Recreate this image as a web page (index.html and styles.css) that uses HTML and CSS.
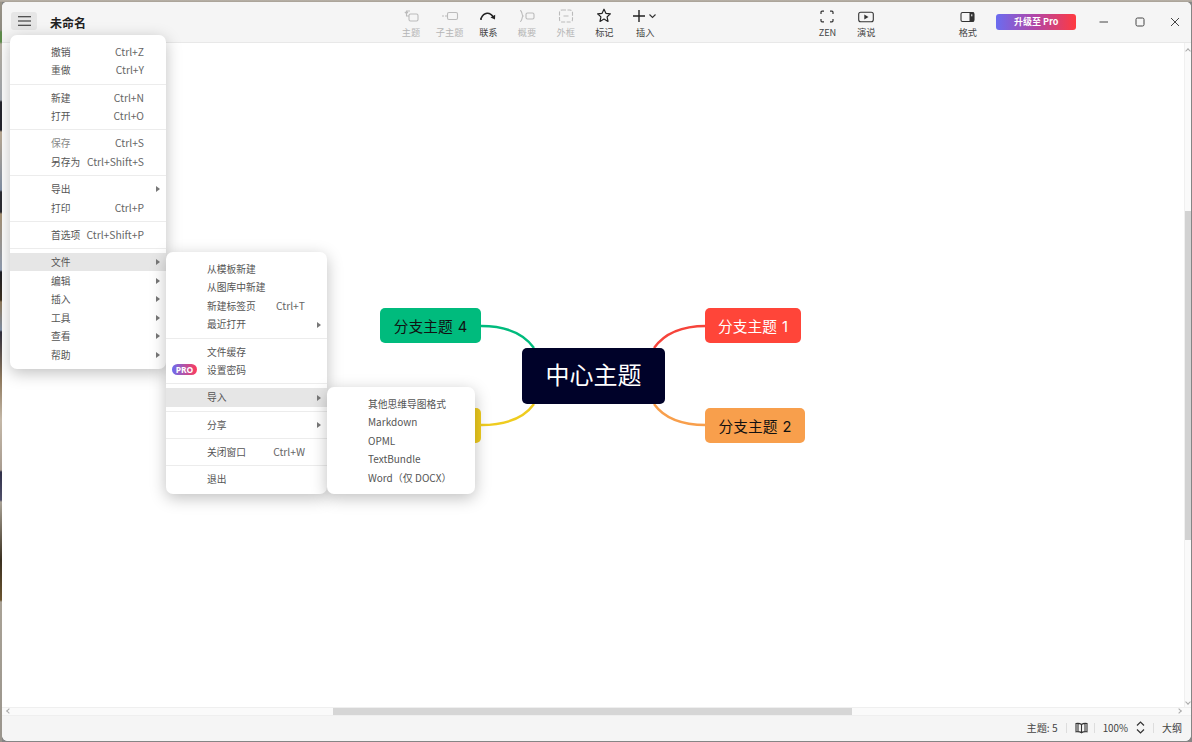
FILE: index.html
```html
<!DOCTYPE html>
<html lang="zh-CN">
<head>
<meta charset="utf-8">
<title>未命名</title>
<link rel="stylesheet" href="styles.css">
</head>
<body>
<div class="window">
  <header class="titlebar">
    <button class="menu-btn"><svg width="13" height="10" viewBox="0 0 13 10"><path d="M0 .7h13M0 5h13M0 9.300h13" stroke="#222" stroke-width="1.100"/></svg></button>
    <div class="doc-title">未命名</div>
    <div class="tools">
      <div class="tool off"><svg width="16" height="14" viewBox="0 0 16 14"><path d="M7 2H3.500v5H6M3.500 4.500 1.800 2.800M3.500 4.500 5 3" fill="none" stroke="#bbb" stroke-width="1.100"/><rect x="6" y="5" width="9" height="7" rx="1.500" fill="none" stroke="#bbb" stroke-width="1.100"/></svg><span>主题</span></div>
      <div class="tool off"><svg width="18" height="14" viewBox="0 0 18 14"><path d="M1 7h5" stroke="#bbb" stroke-width="1.200" stroke-dasharray="2 1"/><rect x="6.500" y="3.500" width="10" height="7" rx="1.500" fill="none" stroke="#bbb" stroke-width="1.100"/></svg><span>子主题</span></div>
      <div class="tool"><svg width="18" height="14" viewBox="0 0 18 14"><path d="M2 9.500C5 3 11 2.500 14.500 8.500" fill="none" stroke="#222" stroke-width="1.600"/><path d="M11.500 8.500 16 10.500 16.200 5.700Z" fill="#222"/><circle cx="2" cy="10" r="1.100" fill="#222"/></svg><span>联系</span></div>
      <div class="tool off"><svg width="16" height="14" viewBox="0 0 16 14"><path d="M1 1.500c2.500 0 1.500 4.500 3 5.500-1.500 1-.5 5.500-3 5.500" fill="none" stroke="#bbb" stroke-width="1.100"/><rect x="7" y="4" width="8" height="6" rx="1.500" fill="none" stroke="#bbb" stroke-width="1.100"/></svg><span>概要</span></div>
      <div class="tool off"><svg width="16" height="14" viewBox="0 0 16 14"><rect x="1.500" y="1" width="13" height="12" rx="2.500" fill="none" stroke="#bbb" stroke-width="1.100" stroke-dasharray="4 1.500"/><path d="M5.500 7h5" stroke="#bbb" stroke-width="1.100"/></svg><span>外框</span></div>
      <div class="tool"><svg width="16" height="15" viewBox="0 0 16 15"><path d="M8 1.200 9.900 5.300 14.400 5.800 11.100 8.900 12 13.400 8 11.100 4 13.400 4.900 8.900 1.600 5.800 6.100 5.300Z" fill="none" stroke="#222" stroke-width="1.200" stroke-linejoin="round"/></svg><span>标记</span></div>
      <div class="tool tool-insert"><svg width="25" height="14" viewBox="0 0 25 14"><path d="M6 1v12M0 7h12" stroke="#222" stroke-width="1.400"/><path d="M16.500 5.500 19.500 8.500 22.500 5.500" fill="none" stroke="#333" stroke-width="1.100"/></svg><span>插入</span></div>
    </div>
    <div class="tools tools-view">
      <div class="tool"><svg width="14" height="13" viewBox="0 0 14 13"><path d="M1 4V2.200a1 1 0 0 1 1-1h2M10 1.200h2a1 1 0 0 1 1 1V4M13 9v1.800a1 1 0 0 1-1 1h-2M4 11.800H2a1 1 0 0 1-1-1V9" fill="none" stroke="#333" stroke-width="1.200"/></svg><span>ZEN</span></div>
      <div class="tool"><svg width="16" height="12" viewBox="0 0 16 12"><rect x=".7" y="1.200" width="14.600" height="9.600" rx="2" fill="none" stroke="#333" stroke-width="1.100"/><path d="M6.300 3.500 10.500 6 6.300 8.500Z" fill="#333"/></svg><span>演说</span></div>
    </div>
    <div class="tools tools-format">
      <div class="tool"><svg width="15" height="12" viewBox="0 0 15 12"><rect x="1" y="1.500" width="13" height="9" rx="1.500" fill="none" stroke="#333" stroke-width="1.100"/><path d="M9.500 1.500H14v9H9.500Z" fill="#333"/><path d="M11.800 3.300v2" stroke="#fff"/></svg><span>格式</span></div>
    </div>
    <button class="pro-btn">升级至 Pro</button>
    <div class="win-controls">
      <svg width="10" height="10" viewBox="0 0 10 10"><path d="M.5 5h8.500" stroke="#444"/></svg>
      <svg width="10" height="10" viewBox="0 0 10 10"><rect x="1" y="1" width="8" height="8" rx="1.500" fill="none" stroke="#444"/></svg>
      <svg width="10" height="10" viewBox="0 0 10 10"><path d="M1 1l8 8M9 1 1 9" stroke="#444"/></svg>
    </div>
  </header>

  <main class="canvas">
    <svg class="links" width="1190" height="670" viewBox="0 0 1190 670">
      <path d="M652 305C662 291 678 283 704 283" class="l-red"/>
      <path d="M652 361C662 375 678 382 704 382" class="l-orange"/>
      <path d="M532 305C522 291 505 283 479 283" class="l-green"/>
      <path d="M532 361C522 375 505 382 479 382" class="l-yellow"/>
    </svg>
    <div class="node center">中心主题</div>
    <div class="node n1">分支主题 1</div>
    <div class="node n2">分支主题 2</div>
    <div class="node n4">分支主题 4</div>
    <div class="node n3"></div>

    <div class="vscroll"><i class="up"></i><b></b><i class="down"></i></div>
    <div class="hscroll"><i class="left"></i><b></b><i class="right"></i></div>

    <nav class="menu m1">
      <div class="row"><span>撤销</span><kbd>Ctrl+Z</kbd></div>
      <div class="row"><span>重做</span><kbd>Ctrl+Y</kbd></div>
      <hr>
      <div class="row"><span>新建</span><kbd>Ctrl+N</kbd></div>
      <div class="row"><span>打开</span><kbd>Ctrl+O</kbd></div>
      <hr>
      <div class="row dim"><span>保存</span><kbd>Ctrl+S</kbd></div>
      <div class="row"><span>另存为</span><kbd>Ctrl+Shift+S</kbd></div>
      <hr>
      <div class="row sub"><span>导出</span></div>
      <div class="row"><span>打印</span><kbd>Ctrl+P</kbd></div>
      <hr>
      <div class="row"><span>首选项</span><kbd>Ctrl+Shift+P</kbd></div>
      <hr>
      <div class="row sub active"><span>文件</span></div>
      <div class="row sub"><span>编辑</span></div>
      <div class="row sub"><span>插入</span></div>
      <div class="row sub"><span>工具</span></div>
      <div class="row sub"><span>查看</span></div>
      <div class="row sub"><span>帮助</span></div>
    </nav>

    <nav class="menu m2">
      <div class="row"><span>从模板新建</span></div>
      <div class="row"><span>从图库中新建</span></div>
      <div class="row"><span>新建标签页</span><kbd>Ctrl+T</kbd></div>
      <div class="row sub"><span>最近打开</span></div>
      <hr>
      <div class="row"><span>文件缓存</span></div>
      <div class="row"><em class="pro-tag">PRO</em><span>设置密码</span></div>
      <hr>
      <div class="row sub active"><span>导入</span></div>
      <hr>
      <div class="row sub"><span>分享</span></div>
      <hr>
      <div class="row"><span>关闭窗口</span><kbd>Ctrl+W</kbd></div>
      <hr>
      <div class="row"><span>退出</span></div>
    </nav>

    <nav class="menu m3">
      <div class="row"><span>其他思维导图格式</span></div>
      <div class="row"><span class="latin">Markdown</span></div>
      <div class="row"><span class="latin">OPML</span></div>
      <div class="row"><span class="latin">TextBundle</span></div>
      <div class="row"><span class="latin">Word（仅 DOCX）</span></div>
    </nav>
  </main>

  <footer class="statusbar">
    <span class="count">主题: 5</span><s></s>
    <svg class="book" width="13" height="12" viewBox="0 0 13 12"><path d="M6.500 2.500C5 1.300 3 1.200 1 1.500v8.300c2-.3 4-.2 5.500 1 1.500-1.200 3.500-1.300 5.500-1V1.500c-2-.3-4-.2-5.500 1ZM6.500 2.500v8.300M3 1.300v8.400M10 1.300v8.400" fill="none" stroke="#333" stroke-width="1.100"/></svg><s></s>
    <span class="zoom">100%</span>
    <svg width="9" height="13" viewBox="0 0 9 13"><path d="M1 4.500 4.500 1 8 4.500M1 8.500 4.500 12 8 8.500" fill="none" stroke="#333" stroke-width="1.200"/></svg><s></s>
    <span>大纲</span>
  </footer>
</div>
</body>
</html>
```
FILE: styles.css
```css
* { box-sizing: border-box; }
html, body { margin: 0; height: 100%; overflow: hidden; }
body {
  width: 1192px;
  height: 742px;
  padding: 2px 1px 1px 2px;
  background:
    linear-gradient(#b9b2a8, #a8a196) 0 0 / 100% 2px no-repeat,
    linear-gradient(#9a9488 0, #8d8a80 30px, #5d8a4a 32px, #5d8a4a 42px, #b0a99c 44px, #9aa0a8 100px, #23232b 102px, #23232b 130px, #b5a58f 132px, #7d8ba0 190px, #2a2a30 192px, #2a2a30 212px, #a08c70 214px, #8b97ab 270px, #1e1e24 272px, #3c3020 300px, #8a7658 302px, #7d8ba0 330px, #2f2c3a 332px, #8f7a5e 380px, #c4b8a8 420px, #a89c90 470px, #30304a 472px, #50506a 500px, #a9a296 502px, #3a3020 560px, #6b5530 600px, #a9a296 602px, #99948c 742px) 0 0 / 2px 100% no-repeat,
    #858585;
  font-family: "Noto Sans CJK SC", "Noto Sans", sans-serif;
  font-size: 10px;
  color: #333;
}
.window {
  height: 739px;
  display: flex;
  flex-direction: column;
  background: #fff;
  border-radius: 5px 5px 6px 6px;
  overflow: hidden;
}
.titlebar {
  flex: 0 0 41px;
  display: flex;
  align-items: center;
  background: #f5f5f5;
  border-bottom: 1px solid #e8e8e8;
  padding-left: 9px;
}
.menu-btn {
  width: 26px;
  height: 18px;
  padding: 0;
  border: 0;
  border-radius: 3px;
  background: #e6e6e6;
  display: flex;
  align-items: center;
  justify-content: center;
  margin-bottom: 2px;
}
.doc-title { margin-left: 13px; width: 341.6px; padding-top: 2px; font-size: 12px; font-weight: 700; color: #222; line-height: 16px; }
.tools { display: flex; margin-bottom: 3px; }
.tool {
  width: 38.7px;
  height: 36px;
  display: flex;
  flex-direction: column;
  align-items: center;
  justify-content: flex-end;
  color: #444;
  line-height: 14px;
}
.tool svg { margin-bottom: 2px; flex: none; }
.tool span { font-size: 9.2px; white-space: nowrap; }
.tool.off span { color: #b5b5b5; }
.tool-insert { width: 43px; }
.tools-view { margin-left: 141.4px; }
.tools-format { margin-left: 63px; }
.pro-btn {
  width: 80px;
  height: 16px;
  margin-left: 9px;
  margin-bottom: 1px;
  padding: 0;
  border: 0;
  border-radius: 3px;
  background: linear-gradient(90deg, #6a6cf0, #b445a5 50%, #ff3a3f);
  color: #fff;
  font: 700 9px/16px "Noto Sans CJK SC", sans-serif;
}
.win-controls { flex: 1; display: flex; justify-content: space-between; padding: 0 11px 1px 23px; align-items: center; }

.canvas { flex: 1; position: relative; background: #fff; }
.links { position: absolute; left: 0; top: 0; }
.links path { fill: none; stroke-width: 2.4; }
.l-red { stroke: #f6443b; }
.l-orange { stroke: #f89f4c; }
.l-green { stroke: #00bb7d; }
.l-yellow { stroke: #efcc1f; }
.node {
  position: absolute;
  display: flex;
  align-items: center;
  justify-content: center;
  border-radius: 5px;
  font-family: Inter, "Noto Sans CJK SC", sans-serif;
  font-size: 14.7px;
  word-spacing: 1px;
  color: #111;
  white-space: nowrap;
}
.center { left: 520px; top: 305px; width: 143px; height: 56px; padding-bottom: 6px; background: #000229; color: #fff; font-size: 24px; }
.n1 { left: 703px; top: 265px; width: 96px; height: 35px; background: #ff4539; color: #fff; }
.n2 { left: 703px; top: 365px; width: 100px; height: 35px; background: #f89f4c; }
.n4 { left: 378px; top: 265px; width: 101px; height: 35px; background: #00bb7d; }
.n3 { left: 378px; top: 365px; width: 101px; height: 35px; background: #efcc1f; }

.vscroll { position: absolute; right: 0; top: 0; bottom: 9px; width: 7px; background: #fafafa; border-left: 1px solid #f0f0f0; }
.vscroll b { position: absolute; left: 0; right: 0; top: 168px; height: 329px; background: #d2d2d2; }
.hscroll { position: absolute; left: 0; right: 0; bottom: 0; height: 9px; background: #fafafa; border-top: 1px solid #efefef; border-bottom: 1px solid #efefef; }
.hscroll b { position: absolute; left: 331px; width: 519px; top: 0; bottom: 0; background: #d6d6d6; }
.vscroll i, .hscroll i { position: absolute; width: 4px; height: 4px; border: solid #aaa; border-width: 1px 0 0 1px; }
.up { top: 6px; left: 1px; transform: rotate(45deg); }
.down { bottom: 3px; left: 1px; transform: rotate(225deg); }
.left { left: 5px; top: 1px; transform: rotate(-45deg); }
.right { right: 10px; top: 1px; transform: rotate(135deg); }

.menu {
  position: absolute;
  background: #fff;
  border-radius: 7px;
  box-shadow: 0 4px 16px rgba(0, 0, 0, .25);
  color: #555;
}
.m1 { left: 8px; top: -8px; width: 156px; padding: 7.5px 0 5.25px; }
.m2 { left: 164px; top: 209px; width: 161px; padding: 7.5px 0 5.5px; }
.m3 { left: 325px; top: 344px; width: 148px; padding: 7.5px 0 6.5px; }
.row {
  height: 18.5px;
  display: flex;
  align-items: center;
  justify-content: space-between;
  padding: 0 22px 0 41px;
  position: relative;
  line-height: 14px;
  white-space: nowrap;
}
.row span { font-size: 9.75px; }
.row .latin { font-size: 10px; }
kbd { font: inherit; font-size: 10.3px; color: #666; }
.dim { color: #888; }
.active { background: #e6e6e6; }
.sub::after {
  content: "";
  position: absolute;
  right: 6px;
  top: 6.5px;
  border-left: 4px solid #777;
  border-top: 3px solid transparent;
  border-bottom: 3px solid transparent;
}
.menu hr { height: 1px; margin: 4px 0 3.8px; border: 0; background: #ececec; }
.pro-tag {
  position: absolute;
  left: 6px;
  top: 3.5px;
  width: 25px;
  height: 11px;
  border-radius: 6px;
  background: linear-gradient(90deg, #6a6cf0, #ff3a5a);
  color: #fff;
  font: 700 8.5px/11px "Noto Sans", sans-serif;
  text-align: center;
}
.statusbar {
  flex: 0 0 25px;
  display: flex;
  align-items: center;
  justify-content: flex-end;
  gap: 8px;
  padding: 0 9px 2px 0;
  background: #f5f5f5;
  font-size: 10px;
  color: #444;
}
.statusbar s { width: 1px; height: 10px; background: #ddd; }
.count { font-size: 10.2px; }
.book { margin-right: -2px; }
.zoom { font-size: 9.8px; }
```
